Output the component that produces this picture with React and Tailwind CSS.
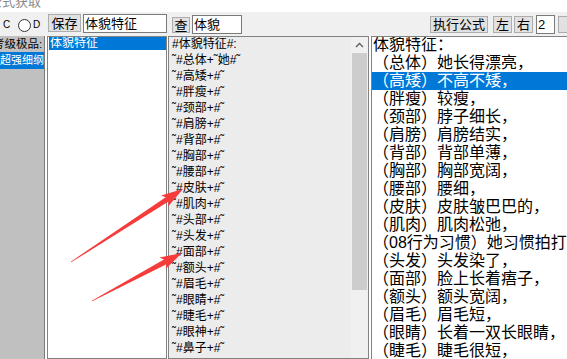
const CJK = "font-['Liberation_Sans','Noto_Sans_CJK_SC',sans-serif]"

const parts = ['高矮', '胖瘦', '颈部', '肩膀', '背部', '胸部', '腰部', '皮肤', '肌肉', '头部', '头发', '面部', '额头', '眉毛', '眼睛', '睫毛', '眼神', '鼻子']

const formula = ['#体貌特征#:', '˜#总体+˜她#˜', ...parts.map(p => `˜#${p}+#˜`)]

const result = [
  '体貌特征：',
  '（总体）她长得漂亮，',
  '（高矮）不高不矮，',
  '（胖瘦）较瘦，',
  '（颈部）脖子细长，',
  '（肩膀）肩膀结实，',
  '（背部）背部单薄，',
  '（胸部）胸部宽阔，',
  '（腰部）腰细，',
  '（皮肤）皮肤皱巴巴的，',
  '（肌肉）肌肉松弛，',
  '（08行为习惯）她习惯拍打桌子，',
  '（头发）头发染了，',
  '（面部）脸上长着痦子，',
  '（额头）额头宽阔，',
  '（眉毛）眉毛短，',
  '（眼睛）长着一双长眼睛，',
  '（睫毛）睫毛很短，',
]

function Btn({ className, children }) {
  return (
    <div className={`flex items-center justify-center bg-[#e1e1e1] border border-[#adadad] text-[13px] leading-none text-black ${className}`}>
      {children}
    </div>
  )
}

function Field({ className, children }) {
  return (
    <div className={`flex items-center bg-white border border-[#7a7a7a] pl-px text-[13px] leading-none text-black whitespace-nowrap overflow-hidden ${className}`}>
      {children}
    </div>
  )
}

function Arrow({ x, y, angle, len }) {
  const h = len
  return (
    <g transform={`translate(${x} ${y}) rotate(${angle})`}>
      <polygon
        points={`0,-0.4 ${h - 19},-2.6 ${h - 22},-6.5 ${h},0 ${h - 22},6.5 ${h - 19},2.6 0,0.4`}
        fill="#f63b3b"
      />
    </g>
  )
}

export default function App() {
  return (
    <div className={`relative w-[567px] h-[359px] overflow-hidden bg-white ${CJK}`}>
      {/* window title, mostly scrolled off */}
      <div className="h-[12px] overflow-hidden bg-white">
        <div className="ml-[-11px] mt-[-5px] text-[13px] leading-[13px] text-[#8a8a8a] whitespace-nowrap">公式获取</div>
      </div>

      {/* toolbar */}
      <div className="flex items-start h-[24px] bg-[#f0f0f0] whitespace-nowrap">
        <span className="ml-[3px] mt-[8px] w-[7px] text-[10px] leading-[10px] text-black">C</span>
        <span className="ml-[8px] mt-[7px] w-[13px] h-[13px] rounded-full border border-[#333] bg-white flex-none" />
        <span className="ml-[2px] mt-[8px] w-[7px] text-[10px] leading-[10px] text-black">D</span>
        <Btn className="ml-[8px] mt-[2px] w-[33px] h-[18px] flex-none">保存</Btn>
        <Field className="ml-[2px] mt-[2px] w-[84px] h-[19px] flex-none">体貌特征</Field>
        <Btn className="ml-[5px] mt-[5px] w-[18px] h-[16px] flex-none">查</Btn>
        <Field className="ml-[2px] mt-[3px] w-[50px] h-[19px] flex-none">体貌</Field>
        <Btn className="ml-[188px] mt-[4px] w-[58px] h-[17px] flex-none text-[12px]">执行公式</Btn>
        <Btn className="ml-[5px] mt-[4px] w-[19px] h-[17px] flex-none">左</Btn>
        <Btn className="ml-[2px] mt-[4px] w-[19px] h-[17px] flex-none">右</Btn>
        <Field className="ml-[3px] mt-[3px] w-[19px] h-[19px] flex-none">2</Field>
        <Btn className="ml-[3px] mt-[4px] w-[20px] h-[17px] flex-none" />
      </div>

      {/* panels */}
      <div className="flex h-[323px]">
        <div className="w-[45px] flex-none bg-[#c0c0c0] border-r border-[#7a7a7a] overflow-hidden whitespace-nowrap text-[11.5px]">
          <div className="h-[16px] leading-[16px] ml-[-7px] text-black">考级极品:</div>
          <div className="h-[17px] leading-[17px] bg-[#0078d7] text-white text-[11px]">超强细纲</div>
        </div>

        <div className="w-[2px] flex-none" />

        <div className="w-[120px] flex-none border border-[#828282] overflow-hidden whitespace-nowrap">
          <div className="ml-px h-[13px] leading-[13px] bg-[#0078d7] text-white text-[12px] pl-px">体貌特征</div>
        </div>

        <div className="w-[1px] flex-none" />

        <div className="w-[201px] flex-none flex border border-[#828282]">
          <div className="w-[182px] bg-[#ececec] overflow-hidden whitespace-nowrap pl-[3px] text-[12px] text-black">
            <div className="mt-[-1px]">
              {formula.map((l, i) => (
                <div key={i} className="h-[16px] leading-[16px]">{l}</div>
              ))}
            </div>
          </div>
          <div className="w-[17px] bg-[#f0f0f0] flex flex-col">
            <div className="h-[16px] flex items-center justify-center">
              <svg width="9" height="6" viewBox="0 0 9 6">
                <path d="M1 5 L4.5 1.5 L8 5" fill="none" stroke="#606060" strokeWidth="1.4" />
              </svg>
            </div>
            <div className="ml-px w-[15px] h-[237px] bg-[#cdcdcd]" />
          </div>
        </div>

        <div className="w-[2px] flex-none" />

        <div className="flex-1 border-l border-t border-[#828282] overflow-hidden whitespace-nowrap text-[16px] text-black">
          <div className="mt-[-1px]">
            {result.map((l, i) => (
              <div
                key={i}
                className={`h-[18px] leading-[18px] pl-px ${i === 2 ? 'bg-[#0078d7] text-white' : ''}`}
              >
                {l}
              </div>
            ))}
          </div>
        </div>
      </div>

      {/* annotation arrows */}
      <svg className="absolute inset-0 pointer-events-none" width="567" height="359">
        <Arrow x={71} y={262} angle={-33.1} len={133.7} />
        <Arrow x={92} y={301} angle={-28.1} len={102} />
      </svg>
    </div>
  )
}
